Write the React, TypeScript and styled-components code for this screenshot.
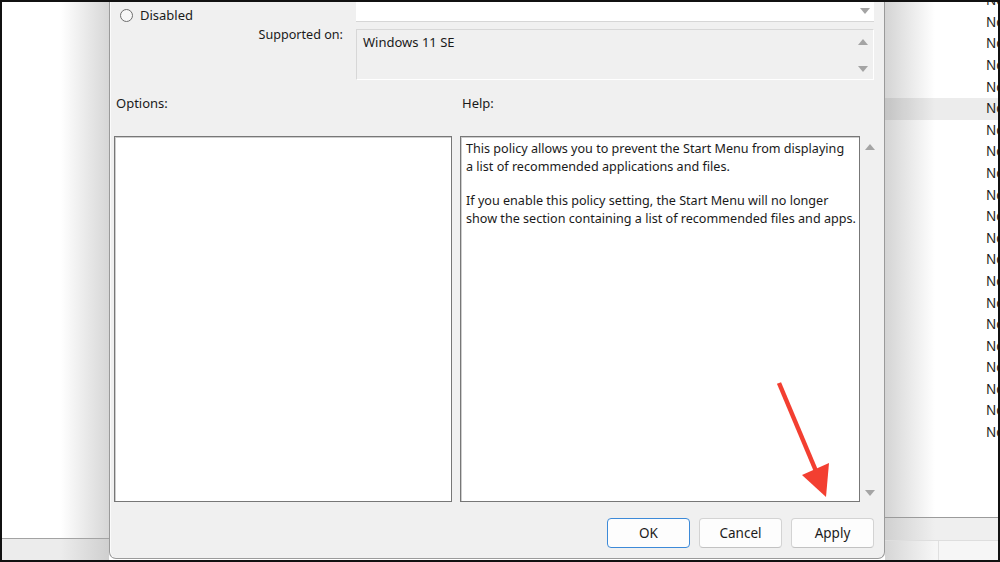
import React from "react";
import styled, { createGlobalStyle } from "styled-components";

const Global = createGlobalStyle`
  html, body { margin: 0; padding: 0; background: #000; }
  * { box-sizing: border-box; }
`;

const Frame = styled.div`
  position: relative;
  width: 1000px;
  height: 562px;
  border: 2px solid #111;
  display: flex;
  overflow: hidden;
  background: #fff;
  font-family: "Noto Sans", "Open Sans", sans-serif;
  font-size: 12.6px;
  color: #1a1a1a;
`;

const LeftPane = styled.div`
  width: 107px;
  flex: none;
  display: flex;
  flex-direction: column;
`;

const LeftBody = styled.div`
  flex: 1;
  background: linear-gradient(to right, #ffffff 55%, #d6d6d6 100%);
`;

const LeftFooter = styled.div`
  height: 22px;
  flex: none;
  border-top: 1px solid #a3a3a3;
  background: linear-gradient(to right, #ececec 55%, #cfcfcf 100%);
`;

const Dialog = styled.div`
  width: 776px;
  height: 557px;
  flex: none;
  background: #f0f0f0;
  border: 1px solid #9a9a9a;
  border-top: none;
  border-radius: 0 0 7px 7px;
  box-shadow: inset 1px 0 0 #fbfbfb;
  display: flex;
  flex-direction: column;
`;

const FieldRow = styled.div<{ $top?: number; $height: number }>`
  display: flex;
  height: ${(p) => p.$height}px;
  margin-top: ${(p) => p.$top ?? 0}px;
  flex: none;
`;

const LabelCell = styled.div<{ $align?: "left" | "right" }>`
  width: 246px;
  flex: none;
  display: flex;
  justify-content: ${(p) => (p.$align === "right" ? "flex-end" : "flex-start")};
  align-items: flex-start;
  padding: ${(p) => (p.$align === "right" ? "0 13px 0 0" : "0 0 0 10px")};
`;

const RadioOption = styled.label`
  display: flex;
  align-items: center;
  gap: 7px;
  height: 13px;
  margin-top: 7px;
  line-height: 13px;
  font-size: 13px;
`;

const RadioCircle = styled.span`
  width: 13px;
  height: 13px;
  border-radius: 50%;
  border: 1px solid #6e6e6e;
  background: #f7f7f7;
  flex: none;
`;

const FieldLabel = styled.span`
  line-height: 14px;
  margin-top: -1px;
  white-space: nowrap;
`;

const ValueField = styled.div`
  width: 518px;
  height: 100%;
  flex: none;
  display: flex;
  background: #ffffff;
  border-bottom: 1px solid #d6d6d6;
`;

const ReadOnlyBox = styled.div`
  width: 518px;
  height: 100%;
  flex: none;
  display: flex;
  background: #f0f0f0;
  border: 1px solid;
  border-color: #d7d7d7 #ffffff #ffffff #d7d7d7;
`;

const BoxText = styled.div`
  flex: 1;
  padding: 5px 6px;
  line-height: 14px;
  font-size: 13px;
`;

const Spacer = styled.div`
  flex: 1;
`;

const ScrollColumn = styled.div<{ $width: number; $pad: string; $align?: string }>`
  width: ${(p) => p.$width}px;
  flex: none;
  display: flex;
  flex-direction: column;
  align-items: center;
  justify-content: ${(p) => p.$align ?? "space-between"};
  padding: ${(p) => p.$pad};
`;

const Arrow = styled.span<{ $dir: "up" | "down" }>`
  width: 0;
  height: 0;
  border-left: 5px solid transparent;
  border-right: 5px solid transparent;
  ${(p) =>
    p.$dir === "up"
      ? "border-bottom: 6px solid #a4a4a4;"
      : "border-top: 6px solid #a4a4a4;"}
`;

const PanelGrid = styled.div<{ $top: number; $height: number }>`
  display: flex;
  flex: none;
  margin-top: ${(p) => p.$top}px;
  height: ${(p) => p.$height}px;
  padding-left: 4px;
`;

const SectionLabel = styled.div<{ $width: number; $gap?: number }>`
  width: ${(p) => p.$width}px;
  margin-right: ${(p) => p.$gap ?? 0}px;
  padding-left: 2px;
  line-height: 16px;
  font-size: 13px;
`;

const InsetBox = styled.div<{ $width: number; $gap?: number }>`
  width: ${(p) => p.$width}px;
  margin-right: ${(p) => p.$gap ?? 0}px;
  height: 100%;
  flex: none;
  background: #ffffff;
  border: 1px solid #777777;
  box-shadow: inset 1px 1px 0 #cdcdcd;
  padding: 3px 5px;
  overflow: hidden;
`;

const HelpParagraph = styled.p`
  margin: 0 0 16px;
  line-height: 18px;
  white-space: nowrap;
  font-size: 12.6px;
`;

const ButtonRow = styled.div`
  display: flex;
  justify-content: flex-end;
  gap: 9px;
  flex: none;
  height: 30px;
  margin-top: 16px;
  padding-right: 10px;
`;

const DialogButton = styled.button<{ $primary?: boolean }>`
  width: 83px;
  height: 30px;
  font-family: inherit;
  font-size: 13.5px;
  color: #1b1b1b;
  background: #fdfdfd;
  border: 1px solid ${(p) => (p.$primary ? "#3d8ad8" : "#d3d3d3")};
  border-bottom-color: ${(p) => (p.$primary ? "#3d8ad8" : "#c2c2c2")};
  border-radius: 4px;
  padding: 0;
`;

const RightPane = styled.div`
  flex: 1;
  min-width: 0;
  display: flex;
  flex-direction: column;
`;

const ListArea = styled.div`
  flex: 1;
  overflow: hidden;
  background: linear-gradient(to right, #d4d4d4 0px, #ffffff 50px);
`;

const List = styled.div`
  margin-top: -11.8px;
`;

const ListRow = styled.div<{ $selected?: boolean }>`
  height: 21.6px;
  line-height: 21.6px;
  padding-left: 101px;
  white-space: nowrap;
  font-size: 13.5px;
  color: #1c1c1c;
  background: ${(p) => (p.$selected ? "rgba(0,0,0,0.075)" : "transparent")};
`;

const HScrollBar = styled.div`
  height: 24px;
  flex: none;
  border-top: 1px solid #9b9b9b;
  border-bottom: 1px solid #dedede;
  background: linear-gradient(to right, #d0d0d0 0px, #efefef 50px);
`;

const StatusBar = styled.div`
  height: 19px;
  flex: none;
  display: flex;
  background: linear-gradient(to right, #d6d6d6 0px, #f6f6f6 50px);
`;

const StatusCell = styled.div<{ $width?: number }>`
  width: ${(p) => (p.$width ? `${p.$width}px` : "auto")};
  flex: ${(p) => (p.$width ? "none" : "1")};
  border-right: ${(p) => (p.$width ? "1px solid #e0e0e0" : "none")};
`;

const Annotation = styled.svg`
  position: absolute;
  left: 758px;
  top: 368px;
  width: 80px;
  height: 140px;
  pointer-events: none;
`;

export default function App() {
  const rows = Array.from({ length: 24 }, (_, i) => i);
  return (
    <>
      <Global />
      <Frame>
        <LeftPane>
          <LeftBody />
          <LeftFooter />
        </LeftPane>

        <Dialog>
          <FieldRow $height={20}>
            <LabelCell>
              <RadioOption>
                <RadioCircle />
                Disabled
              </RadioOption>
            </LabelCell>
            <ValueField>
              <Spacer />
              <ScrollColumn $width={19} $pad="0 0 7px" $align="flex-end">
                <Arrow $dir="down" />
              </ScrollColumn>
            </ValueField>
          </FieldRow>

          <FieldRow $top={7} $height={51}>
            <LabelCell $align="right">
              <FieldLabel>Supported on:</FieldLabel>
            </LabelCell>
            <ReadOnlyBox>
              <BoxText>Windows 11 SE</BoxText>
              <ScrollColumn $width={20} $pad="9px 0 7px">
                <Arrow $dir="up" />
                <Arrow $dir="down" />
              </ScrollColumn>
            </ReadOnlyBox>
          </FieldRow>

          <PanelGrid $top={15} $height={16}>
            <SectionLabel $width={338} $gap={8}>Options:</SectionLabel>
            <SectionLabel $width={400}>Help:</SectionLabel>
          </PanelGrid>

          <PanelGrid $top={25} $height={366}>
            <InsetBox $width={338} $gap={8} />
            <InsetBox $width={400}>
              <HelpParagraph>
                This policy allows you to prevent the Start Menu from displaying
                <br />a list of recommended applications and files.
              </HelpParagraph>
              <HelpParagraph>
                If you enable this policy setting, the Start Menu will no longer
                <br />show the section containing a list of recommended files and apps.
              </HelpParagraph>
            </InsetBox>
            <ScrollColumn $width={19} $pad="8px 0 6px">
              <Arrow $dir="up" />
              <Arrow $dir="down" />
            </ScrollColumn>
          </PanelGrid>

          <ButtonRow>
            <DialogButton $primary>OK</DialogButton>
            <DialogButton>Cancel</DialogButton>
            <DialogButton>Apply</DialogButton>
          </ButtonRow>
        </Dialog>

        <RightPane>
          <ListArea>
            <List>
              {rows.map((i) =>
                i <= 20 ? (
                  <ListRow key={i} $selected={i === 5}>
                    Not configured
                  </ListRow>
                ) : (
                  <ListRow key={i} />
                )
              )}
            </List>
          </ListArea>
          <HScrollBar />
          <StatusBar>
            <StatusCell $width={54} />
            <StatusCell />
          </StatusBar>
        </RightPane>

        <Annotation viewBox="0 0 80 140">
          <line x1="19" y1="13" x2="56" y2="101" stroke="#f33f31" strokeWidth="4.5" />
          <polygon points="42,105 69,93 66,127" fill="#f33f31" />
        </Annotation>
      </Frame>
    </>
  );
}
